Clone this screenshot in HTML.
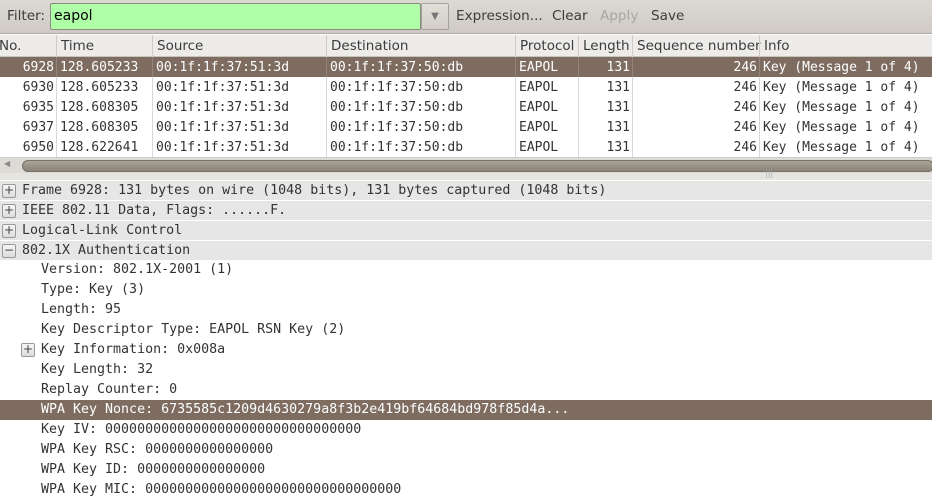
<!DOCTYPE html>
<html><head><style>
*{margin:0;padding:0;box-sizing:border-box}
body{width:932px;height:504px;overflow:hidden;background:#fff;font-family:"DejaVu Sans","Liberation Sans",sans-serif;font-size:13px;color:#3c3c3c;position:relative}
.tb{position:absolute;left:0;top:0;width:932px;height:34px;background:linear-gradient(#dcd9d3,#cfcbc4);border-bottom:1px solid #b0aca5}
.tb span{position:absolute;top:8px;font-size:13.6px;color:#3c3c3c}
.inp{position:absolute;left:50px;top:3px;width:371px;height:27px;background:#afffa8;border:1px solid #8c8a85;border-radius:2px;padding:4px 3px;font-size:14px;color:#000}
.dd{position:absolute;left:421px;top:3px;width:28px;height:27px;border:1px solid #a5a19b;border-radius:2px;background:linear-gradient(#e2dfd9,#d3cfc8);color:#777;font-size:10px;text-align:center;line-height:25px}
.hdr{position:absolute;left:0;top:35px;width:932px;height:22px;background:#edecea;border-bottom:1px solid #c8c5c0}
.hdr div{position:absolute;top:0;height:22px;line-height:22px;padding-left:4px;border-left:1px solid #cfccc7;font-size:13.5px;color:#3c3c3c;white-space:nowrap}
.row{position:absolute;left:0;width:932px;height:20px;font-family:"DejaVu Sans Mono","Liberation Mono",monospace;font-size:13px;color:#333}
.row div{position:absolute;top:0;height:20px;line-height:21px;border-left:1px solid #d8d8d8;padding:0 3px;white-space:pre}
.row.sel{background:#7e6c61;color:#fff}
.row.sel div{border-left-color:#948579}
.r{text-align:right}
.sb{position:absolute;left:0;top:157px;width:932px;height:16px;background:#dedbd6;border-top:1px solid #ccc}
.sb .th{position:absolute;left:22px;top:2px;width:912px;height:12px;border-radius:6px;background:linear-gradient(#a9a398,#8a8378);border:1px solid #77716a}
.pane{position:absolute;left:0;top:173px;width:932px;height:8px;background:#e6e4e0;border-bottom:1px solid #c4c1bb}
.d{position:absolute;left:0;width:932px;height:20px;line-height:20px;font-family:"DejaVu Sans Mono","Liberation Mono",monospace;font-size:13.3px;color:#333;white-space:pre}
.d.top{background:#e6e6e6;border-top:1px solid #fff;line-height:19px}
.d.sel{background:#7e6c61;color:#fff}
.box{position:absolute;top:3px;width:14px;height:14px;border:1px solid #999;border-radius:2px;background:linear-gradient(#f6f6f6,#dcdcdc);font-family:"DejaVu Sans",sans-serif;font-size:12px;line-height:11px;text-align:center;color:#444}
</style></head><body>
<div class="tb">
<span style="left:7px">Filter:</span>
<div class="inp">eapol</div>
<div class="dd">▼</div>
<span style="left:456px">Expression...</span>
<span style="left:552px">Clear</span>
<span style="left:600px;color:#a9a6a0">Apply</span>
<span style="left:651px">Save</span>
</div>
<div class="hdr">
<div style="left:-1px;border:0;padding-left:0">No.</div>
<div style="left:56px">Time</div>
<div style="left:152px">Source</div>
<div style="left:326px">Destination</div>
<div style="left:515px">Protocol</div>
<div style="left:578px">Length</div>
<div style="left:632px">Sequence number</div>
<div style="left:759px">Info</div>
</div>
<div class="row sel" style="top:57px"><div class="r" style="left:0;width:57px;border:0">6928</div><div style="left:56px;width:97px">128.605233</div><div style="left:152px;width:175px">00:1f:1f:37:51:3d</div><div style="left:326px">00:1f:1f:37:50:db</div><div style="left:515px;width:64px">EAPOL</div><div class="r" style="left:578px;width:55px">131</div><div class="r" style="left:632px;width:128px">246</div><div style="left:759px">Key (Message 1 of 4)</div></div>
<div class="row" style="top:77px"><div class="r" style="left:0;width:57px;border:0">6930</div><div style="left:56px;width:97px">128.605233</div><div style="left:152px;width:175px">00:1f:1f:37:51:3d</div><div style="left:326px;width:190px">00:1f:1f:37:50:db</div><div style="left:515px;width:64px">EAPOL</div><div class="r" style="left:578px;width:55px">131</div><div class="r" style="left:632px;width:128px">246</div><div style="left:759px">Key (Message 1 of 4)</div></div>
<div class="row" style="top:97px"><div class="r" style="left:0;width:57px;border:0">6935</div><div style="left:56px;width:97px">128.608305</div><div style="left:152px;width:175px">00:1f:1f:37:51:3d</div><div style="left:326px;width:190px">00:1f:1f:37:50:db</div><div style="left:515px;width:64px">EAPOL</div><div class="r" style="left:578px;width:55px">131</div><div class="r" style="left:632px;width:128px">246</div><div style="left:759px">Key (Message 1 of 4)</div></div>
<div class="row" style="top:117px"><div class="r" style="left:0;width:57px;border:0">6937</div><div style="left:56px;width:97px">128.608305</div><div style="left:152px;width:175px">00:1f:1f:37:51:3d</div><div style="left:326px;width:190px">00:1f:1f:37:50:db</div><div style="left:515px;width:64px">EAPOL</div><div class="r" style="left:578px;width:55px">131</div><div class="r" style="left:632px;width:128px">246</div><div style="left:759px">Key (Message 1 of 4)</div></div>
<div class="row" style="top:137px"><div class="r" style="left:0;width:57px;border:0">6950</div><div style="left:56px;width:97px">128.622641</div><div style="left:152px;width:175px">00:1f:1f:37:51:3d</div><div style="left:326px;width:190px">00:1f:1f:37:50:db</div><div style="left:515px;width:64px">EAPOL</div><div class="r" style="left:578px;width:55px">131</div><div class="r" style="left:632px;width:128px">246</div><div style="left:759px">Key (Message 1 of 4)</div></div>
<div class="sb"><span style="position:absolute;left:4px;top:1px;font-size:8px;color:#888">◀</span><div class="th"></div></div>
<div class="pane"><span style="position:absolute;left:765px;top:-4px;font-size:8px;color:#aaa">|||</span></div>
<div class="d top" style="top:180px"><div class="box" style="left:2px">+</div><span style="position:absolute;left:22px">Frame 6928: 131 bytes on wire (1048 bits), 131 bytes captured (1048 bits)</span></div>
<div class="d top" style="top:200px"><div class="box" style="left:2px">+</div><span style="position:absolute;left:22px">IEEE 802.11 Data, Flags: ......F.</span></div>
<div class="d top" style="top:220px"><div class="box" style="left:2px">+</div><span style="position:absolute;left:22px">Logical-Link Control</span></div>
<div class="d top" style="top:240px"><div class="box" style="left:2px">−</div><span style="position:absolute;left:22px">802.1X Authentication</span></div>
<div class="d" style="top:260px"><span style="position:absolute;left:41px">Version: 802.1X-2001 (1)</span></div>
<div class="d" style="top:280px"><span style="position:absolute;left:41px">Type: Key (3)</span></div>
<div class="d" style="top:300px"><span style="position:absolute;left:41px">Length: 95</span></div>
<div class="d" style="top:320px"><span style="position:absolute;left:41px">Key Descriptor Type: EAPOL RSN Key (2)</span></div>
<div class="d" style="top:340px"><div class="box" style="left:21px">+</div><span style="position:absolute;left:41px">Key Information: 0x008a</span></div>
<div class="d" style="top:360px"><span style="position:absolute;left:41px">Key Length: 32</span></div>
<div class="d" style="top:380px"><span style="position:absolute;left:41px">Replay Counter: 0</span></div>
<div class="d sel" style="top:400px"><span style="position:absolute;left:41px">WPA Key Nonce: 6735585c1209d4630279a8f3b2e419bf64684bd978f85d4a...</span></div>
<div class="d" style="top:420px"><span style="position:absolute;left:41px">Key IV: 00000000000000000000000000000000</span></div>
<div class="d" style="top:440px"><span style="position:absolute;left:41px">WPA Key RSC: 0000000000000000</span></div>
<div class="d" style="top:460px"><span style="position:absolute;left:41px">WPA Key ID: 0000000000000000</span></div>
<div class="d" style="top:480px"><span style="position:absolute;left:41px">WPA Key MIC: 00000000000000000000000000000000</span></div>
</body></html>
